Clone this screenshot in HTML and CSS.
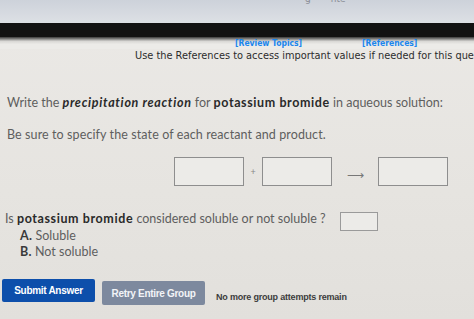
FILE: index.html
```html
<!DOCTYPE html>
<html>
<head>
<meta charset="utf-8">
<link rel="stylesheet" href="styles.css">
</head>
<body>
<div class="top">
  <div class="top-text">g · · · nte</div>
</div>
<div class="blackbar"></div>
<div class="links">
  <span class="link review">[Review Topics]</span>
  <span class="link refs">[References]</span>
</div>
<div class="notice">Use the References to access important values if needed for this question.</div>

<main class="content">
  <p class="q1">Write the <b><i>precipitation reaction</i></b> for <b>potassium bromide</b> in aqueous solution:</p>
  <p class="q2">Be sure to specify the state of each reactant and product.</p>

  <div class="equation">
    <div class="box"></div>
    <span class="plus">+</span>
    <div class="box"></div>
    <span class="arrow">⟶</span>
    <div class="box"></div>
  </div>

  <div class="q3row">
    <p class="q3">Is <b>potassium bromide</b> considered soluble or not soluble ?</p>
    <div class="smallbox"></div>
  </div>
  <ul class="options">
    <li><b>A.</b> Soluble</li>
    <li><b>B.</b> Not soluble</li>
  </ul>

  <div class="actions">
    <button class="btn submit">Submit Answer</button>
    <button class="btn retry">Retry Entire Group</button>
    <span class="remain">No more group attempts remain</span>
  </div>
</main>
</body>
</html>
```
FILE: styles.css
```css
html, body {
  margin: 0;
  padding: 0;
}
body {
  width: 474px;
  height: 319px;
  overflow: hidden;
  background: linear-gradient(180deg, #ebe9e6 0%, #e6e4e0 60%, #e2e0dc 100%);
  font-family: Lato, "Open Sans", sans-serif;
  color: #5e5e5e;
}
.top {
  height: 23px;
  background: linear-gradient(180deg, #cdd2da 0%, #dde0e5 100%);
  position: relative;
  overflow: hidden;
}
.top-text {
  position: absolute;
  left: 305px;
  top: -6px;
  font: 9px "DejaVu Sans", sans-serif;
  color: #8a8e96;
}
.blackbar {
  height: 14px;
  background: #121212;
}
.links {
  height: 12px;
  display: flex;
  align-items: center;
  font: bold 8.5px "DejaVu Sans Condensed", "DejaVu Sans", sans-serif;
  color: #1a86ee;
  line-height: 12px;
  background: linear-gradient(180deg, #3a3a3a 0%, #d8d7d4 35%, #ecebe8 60%);
}
.link.review { margin-left: 235px; }
.link.refs { margin-left: 60px; }
.notice {
  margin-top: 1px;
  padding-left: 135px;
  white-space: nowrap;
  overflow: hidden;
  font: 9.8px "DejaVu Sans", sans-serif;
  color: #2c2c2c;
}
.content {
  padding: 0 0 0 7px;
}
p { margin: 0; }
.q1 {
  margin-top: 34px;
  font-size: 12.5px;
  white-space: nowrap;
}
b { color: #2a2a2a; letter-spacing: 0.6px; }
.q1 i { letter-spacing: 0.7px; }
.q2 {
  margin-top: 17px;
  font-size: 12.5px;
  letter-spacing: 0.1px;
}
.equation {
  display: flex;
  align-items: center;
  margin-top: 15px;
  margin-left: 167px;
}
.box {
  width: 68px;
  height: 27px;
  border: 1px solid #8e8e8e;
  background: #ecebe8;
}
.plus {
  width: 18px;
  text-align: center;
  font-size: 9px;
  color: #888;
}
.arrow {
  width: 46px;
  text-align: center;
  font-size: 12px;
  color: #777;
  margin-top: 6px;
}
.q3row {
  display: flex;
  align-items: center;
  margin-top: 20px;
  margin-left: -2px;
}
.q3 {
  font-size: 12.5px;
  white-space: nowrap;
}
.smallbox {
  width: 36px;
  height: 17px;
  border: 1px solid #9a9a9a;
  margin-left: 14px;
  margin-top: 6px;
  background: #ecebe8;
}
.options {
  list-style: none;
  margin: -3px 0 0 13px;
  padding: 0;
  font-size: 12.5px;
  line-height: 16px;
}
.options b { color: #3a3a3a; letter-spacing: 0.3px; }
.actions {
  display: flex;
  align-items: flex-start;
  margin-top: 19px;
  margin-left: -5px;
}
.btn {
  border: 0;
  border-radius: 2px;
  font: bold 10px "Liberation Sans", Arial, sans-serif;
  color: #fff;
  letter-spacing: -0.3px;
  height: 23px;
  padding: 0;
}
.submit {
  width: 93px;
  background: #0d4fab;
}
.retry {
  width: 103px;
  margin-left: 7px;
  background: #7d899e;
  margin-top: 2px;
  height: 24px;
  color: #f2f4f7;
}
.remain {
  margin-left: 11px;
  margin-top: 13px;
  font: bold 9px "Liberation Sans", Arial, sans-serif;
  color: #3c3c3c;
  letter-spacing: -0.2px;
}
```
